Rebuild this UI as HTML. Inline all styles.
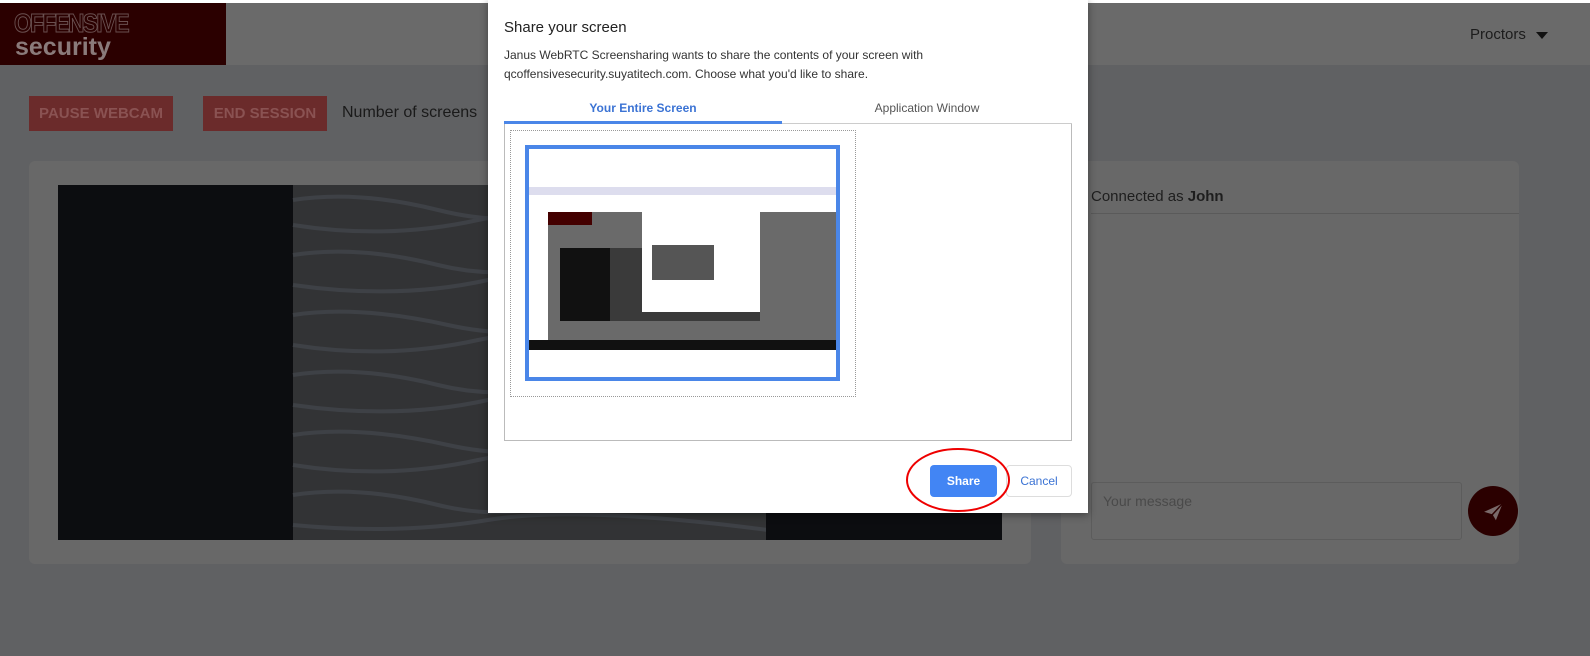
<!DOCTYPE html>
<html><head><meta charset="utf-8"><style>
*{box-sizing:border-box;margin:0;padding:0}
body{width:1590px;height:656px;overflow:hidden;background:#606163;font-family:"Liberation Sans",sans-serif;position:relative}
.top{position:absolute;left:0;top:0;width:1590px;height:3px;background:#fff}
.hdr{position:absolute;left:0;top:3px;width:1590px;height:62px;background:#6a6a6a}
.logo{position:absolute;left:0;top:3px;width:226px;height:62px;background:#2b0000}
.logo .a{position:absolute;left:14px;top:5px;font:bold 26px "Liberation Sans";color:#2b0000;-webkit-text-stroke:1px #6a5050;letter-spacing:-2px;transform:scaleX(.88);transform-origin:left}
.logo .b{position:absolute;left:15px;top:30px;font:900 25px "Liberation Sans";color:#8a7a7a;letter-spacing:0}
.pro{position:absolute;left:1470px;top:26px;font-size:15px;color:#1c1c1c}
.tri{position:absolute;left:1536px;top:32px;border:6px solid transparent;border-top:7px solid #111}
.btn{position:absolute;top:96px;height:35px;background:#6b2b2b;color:#8a5252;font-size:15px;font-weight:bold;line-height:35px;text-align:center}
.nos{position:absolute;left:342px;top:104px;font-size:16px;color:#1a1a1a}
.card{position:absolute;background:#686868;border-radius:6px}
.vid{position:absolute;left:58px;top:185px;width:944px;height:355px;background:#323335;overflow:hidden}
.dlg{position:absolute;left:488px;top:0;width:600px;height:513px;background:#fff;box-shadow:0 2px 8px rgba(0,0,0,.4)}
</style></head><body>
<div class="top"></div>
<div class="hdr"></div>
<div class="logo"><div class="a">OFFENSIVE</div><div class="b">security</div></div>
<div class="pro">Proctors</div><div class="tri"></div>
<div class="btn" style="left:29px;width:144px">PAUSE WEBCAM</div>
<div class="btn" style="left:203px;width:124px">END SESSION</div>
<div class="nos">Number of screens</div>
<div class="card" style="left:29px;top:161px;width:1002px;height:403px"></div>
<div class="card" style="left:1061px;top:161px;width:458px;height:403px"></div>
<div class="vid">
<svg width="944" height="355" style="position:absolute;left:0;top:0">
<rect x="0" y="0" width="235" height="355" fill="#0c0d10"/>
<g stroke="#3e4146" stroke-width="4" fill="none">
<path d="M235 15 Q300 5 380 25 T520 20 T710 30"/><path d="M235 40 Q330 55 420 35 T600 50 T710 40"/>
<path d="M235 70 Q300 60 380 80 T540 65 T710 80"/><path d="M235 100 Q340 115 430 95 T610 110 T710 100"/>
<path d="M235 130 Q300 120 390 140 T550 125 T710 140"/><path d="M235 160 Q330 175 420 155 T600 170 T710 160"/>
<path d="M235 190 Q300 180 380 200 T540 185 T710 200"/><path d="M235 220 Q340 235 430 215 T610 230 T710 220"/>
<path d="M235 250 Q300 240 390 260 T550 245 T710 260"/><path d="M235 280 Q330 295 420 275 T600 290 T710 280"/>
<path d="M235 310 Q300 300 380 320 T540 305 T710 320"/><path d="M235 340 Q340 350 430 335 T710 345"/>
</g>
<rect x="708" y="0" width="236" height="355" fill="#0c0d10"/>
</svg></div>
<div style="position:absolute;left:1091px;top:188px;font-size:15px;color:#1e1e1e">Connected as <b>John</b></div>
<div style="position:absolute;left:1091px;top:213px;width:428px;height:1px;background:#5a5a5a"></div>
<div style="position:absolute;left:1091px;top:482px;width:371px;height:58px;border:1px solid #5c5c5c;border-radius:3px;padding:10px 11px;font-size:14px;color:#4a4a4a">Your message</div>
<div style="position:absolute;left:1468px;top:486px;width:50px;height:50px;border-radius:50%;background:#2b0000">
<svg width="50" height="50"><path d="M14 26 L36 16 L28 36 L24 29 Z M24 29 L36 16" fill="#7a6a6a" stroke="#2b0000" stroke-width="1.5"/></svg></div>
<div class="dlg">
<div style="position:absolute;left:16px;top:19px;font-size:15px;color:#222">Share your screen</div>
<div style="position:absolute;left:16px;top:46px;font-size:12px;color:#333;line-height:19px;width:570px">Janus WebRTC Screensharing wants to share the contents of your screen with qcoffensivesecurity.suyatitech.com. Choose what you'd like to share.</div>
<div style="position:absolute;left:16px;top:101px;width:278px;text-align:center;font-size:12px;font-weight:bold;color:#3b73d4">Your Entire Screen</div>
<div style="position:absolute;left:294px;top:101px;width:290px;text-align:center;font-size:12px;color:#555">Application Window</div>
<div style="position:absolute;left:16px;top:121px;width:278px;height:3px;background:#4a86e8"></div>
<div style="position:absolute;left:294px;top:123px;width:290px;height:1px;background:#ccc"></div>
<div style="position:absolute;left:16px;top:124px;width:568px;height:317px;border:1px solid #bbb;border-top:none"></div>
<div style="position:absolute;left:22px;top:130px;width:346px;height:267px;border:1px dotted #999"></div>
<div style="position:absolute;left:37px;top:145px;width:315px;height:236px;border:4px solid #4a86e8;background:#fff">
<div style="position:absolute;left:0;top:38px;width:307px;height:8px;background:#dde"></div>
<div style="position:absolute;left:19px;top:63px;width:288px;height:128px;background:#6a6a6a"></div>
<div style="position:absolute;left:19px;top:63px;width:44px;height:13px;background:#400"></div>
<div style="position:absolute;left:31px;top:99px;width:50px;height:73px;background:#111"></div>
<div style="position:absolute;left:81px;top:99px;width:150px;height:73px;background:#3a3a3a"></div>
<div style="position:absolute;left:113px;top:63px;width:118px;height:100px;background:#fff"></div>
<div style="position:absolute;left:123px;top:96px;width:62px;height:35px;background:#555"></div>
<div style="position:absolute;left:0;top:191px;width:307px;height:10px;background:#111"></div>
</div>
<div style="position:absolute;left:442px;top:465px;width:67px;height:32px;background:#4285f4;border-radius:4px;color:#fff;font-size:12px;font-weight:bold;text-align:center;line-height:32px">Share</div>
<div style="position:absolute;left:518px;top:465px;width:66px;height:32px;border:1px solid #ddd;border-radius:4px;color:#3b73d4;font-size:12px;text-align:center;line-height:30px">Cancel</div>
<svg style="position:absolute;left:416px;top:446px" width="110" height="68"><ellipse cx="54" cy="34" rx="51" ry="31" fill="none" stroke="#e00" stroke-width="2"/></svg>
</div>
</body></html>
